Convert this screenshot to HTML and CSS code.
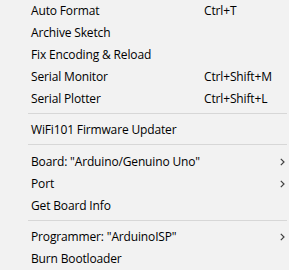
FILE: index.html
```html
<!DOCTYPE html>
<html lang="en">
<head>
    <meta charset="UTF-8">
    <meta name="viewport" content="width=device-width, initial-scale=1.0">
    <title>Tools menu</title>
    <link rel="stylesheet" href="styles.css">
</head>
<body>
    <div class="menu">
        <div class="item"><span class="label">Auto Format</span><span class="keys">Ctrl+T</span><span class="more"></span></div>
        <div class="item"><span class="label">Archive Sketch</span><span class="keys"></span><span class="more"></span></div>
        <div class="item"><span class="label">Fix Encoding &amp; Reload</span><span class="keys"></span><span class="more"></span></div>
        <div class="item"><span class="label">Serial Monitor</span><span class="keys">Ctrl+Shift+M</span><span class="more"></span></div>
        <div class="item"><span class="label">Serial Plotter</span><span class="keys">Ctrl+Shift+L</span><span class="more"></span></div>
        <div class="sep"></div>
        <div class="item"><span class="label">WiFi101 Firmware Updater</span><span class="keys"></span><span class="more"></span></div>
        <div class="sep"></div>
        <div class="item"><span class="label">Board: "Arduino/Genuino Uno"</span><span class="keys"></span>
            <span class="more"><svg width="5" height="8" viewBox="0 0 5 8"><polyline points="0.8,0.8 4,4 0.8,7.2" fill="none" stroke="#404040" stroke-width="1.2"/></svg></span></div>
        <div class="item"><span class="label">Port</span><span class="keys"></span>
            <span class="more"><svg width="5" height="8" viewBox="0 0 5 8"><polyline points="0.8,0.8 4,4 0.8,7.2" fill="none" stroke="#404040" stroke-width="1.2"/></svg></span></div>
        <div class="item"><span class="label">Get Board Info</span><span class="keys"></span><span class="more"></span></div>
        <div class="sep"></div>
        <div class="item"><span class="label">Programmer: "ArduinoISP"</span><span class="keys"></span>
            <span class="more"><svg width="5" height="8" viewBox="0 0 5 8"><polyline points="0.8,0.8 4,4 0.8,7.2" fill="none" stroke="#404040" stroke-width="1.2"/></svg></span></div>
        <div class="item"><span class="label">Burn Bootloader</span><span class="keys"></span><span class="more"></span></div>
    </div>
</body>
</html>
```

FILE: styles.css
```css
html, body{
    margin: 0;
    padding: 0;
    background-color: #f2f2f2;
}
.menu{
    width: 289px;
    font-family: "Open Sans", "Noto Sans", sans-serif;
    font-size: 12px;
    letter-spacing: -0.15px;
    color: #000;
}
.item{
    display: grid;
    grid-template-columns: 173px 1fr 5px;
    align-items: center;
    height: 22px;
    padding-left: 31px;
    padding-right: 4px;
}
.label, .keys{
    white-space: nowrap;
    line-height: 22px;
}
.more{
    display: flex;
    align-items: center;
}
.sep{
    height: 1px;
    margin: 3px 2px 5px 28px;
    background-color: #d7d7d7;
}
.sep + .item + .sep{
    margin-bottom: 6px;
}
```
